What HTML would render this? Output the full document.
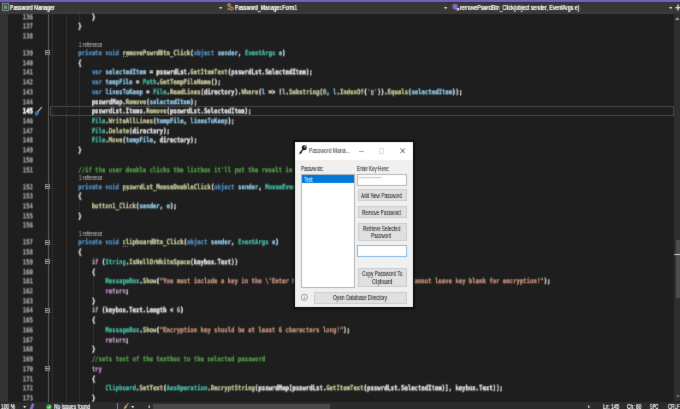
<!DOCTYPE html>
<html lang="en">
<head>
<meta charset="utf-8">
<title>Password Manager</title>
<style>
*{box-sizing:border-box;margin:0;padding:0}
html,body{width:680px;height:409px;overflow:hidden;background:#1e1e1e}
body{position:relative;font-family:"Liberation Sans",sans-serif;color:#dcdcdc}
#root{position:absolute;left:0;top:0;width:680px;height:409px;overflow:hidden;background:#1e1e1e;filter:url(#soft)}
#root div,#root .a,#root svg{position:absolute}
.ln{white-space:pre;font-family:"DejaVu Sans Mono","Liberation Mono",monospace;font-size:6.6px;line-height:10px;height:10px;color:#9a9a9a;text-align:right;width:30px;left:3px;transform-origin:100% 50%;transform:scale(0.8557,1.1);font-weight:bold}
.ln.cur{color:#ffffff}
.code{white-space:pre;font-family:"DejaVu Sans Mono","Liberation Mono",monospace;font-size:6.6px;line-height:10px;height:10px;left:50.8px;color:#dcdcdc;transform-origin:0 50%;transform:scale(0.8557,1.1);font-weight:bold}
.k{color:#4e8abc}.r{color:#be8ec4}.t{color:#47b19c}.m{color:#c1c196}.v{color:#8ac1df}.s{color:#bc8b77}.c{color:#4f9344}.n{color:#a0b595}.p{color:#dcdcdc}
.tx,.code,.ln{will-change:transform}
.code,.ln{text-shadow:0 0 0.7px currentColor;-webkit-text-stroke:0.25px currentColor;opacity:1}
.code span{-webkit-text-stroke-width:0.1px}
.ln{-webkit-text-stroke-width:0}
.ln.cur{-webkit-text-stroke-width:0.3px}
.tx{text-shadow:0 0 0.6px currentColor}
.tx{white-space:pre;transform-origin:0 50%;line-height:12px;height:12px}
.guide{width:1px;background:repeating-linear-gradient(to bottom,#404040 0,#404040 1px,transparent 1px,transparent 2px)}
.btn{background:#e0e0e0;border:1px solid #cbcbcb}
</style>
</head>
<body>
<svg width="0" height="0" style="position:absolute" aria-hidden="true"><filter id="soft" x="0" y="0" width="100%" height="100%" color-interpolation-filters="sRGB"><feConvolveMatrix order="3" kernelMatrix="0.015 0.06 0.015 0.06 0.70 0.06 0.015 0.06 0.015" divisor="1" edgeMode="duplicate" preserveAlpha="true"/></filter></svg>
<div id="root">
<!-- window chrome -->
<div style="left:0px;top:0px;width:680px;height:2px;background:#7361c6;"></div>
<div style="left:0px;top:2px;width:680px;height:12px;background:#373737;"></div>
<div style="left:0px;top:2px;width:680px;height:1px;background:#302f2c;"></div>
<div style="left:0px;top:12px;width:680px;height:2px;background:#3b3b3b;"></div>
<div style="left:0px;top:14px;width:8px;height:388px;background:#333333;"></div>
<!-- outlining margin and structure guides -->
<div style="left:48px;top:14px;width:1px;height:388px;background:#5e5e5e;"></div>
<div class="guide" style="left:52.1px;top:14px;height:388px"></div>
<div class="guide" style="left:65.7px;top:14px;height:388px"></div>
<div class="guide" style="left:79.3px;top:14px;height:6.9px"></div>
<div class="guide" style="left:79.3px;top:67.0px;height:77.8px"></div>
<div class="guide" style="left:79.3px;top:200.6px;height:9.7px"></div>
<div class="guide" style="left:79.3px;top:256.5px;height:145.9px"></div>
<div class="guide" style="left:92.9px;top:275.9px;height:19.5px"></div>
<div class="guide" style="left:92.9px;top:324.6px;height:19.5px"></div>
<div class="guide" style="left:92.9px;top:382.9px;height:9.7px"></div>
<div style="left:45px;top:50px;width:5px;height:5px;background:#2c2c2c;border:1px solid #848484"></div><div style="left:46px;top:52px;width:3px;height:1px;background:#b4b4b4"></div>
<div style="left:45px;top:184px;width:5px;height:5px;background:#2c2c2c;border:1px solid #848484"></div><div style="left:46px;top:186px;width:3px;height:1px;background:#b4b4b4"></div>
<div style="left:45px;top:240px;width:5px;height:5px;background:#2c2c2c;border:1px solid #848484"></div><div style="left:46px;top:242px;width:3px;height:1px;background:#b4b4b4"></div>
<div style="left:45px;top:259px;width:5px;height:5px;background:#2c2c2c;border:1px solid #848484"></div><div style="left:46px;top:261px;width:3px;height:1px;background:#b4b4b4"></div>
<div style="left:45px;top:308px;width:5px;height:5px;background:#2c2c2c;border:1px solid #848484"></div><div style="left:46px;top:310px;width:3px;height:1px;background:#b4b4b4"></div>
<div style="left:45px;top:366px;width:5px;height:5px;background:#2c2c2c;border:1px solid #848484"></div><div style="left:46px;top:368px;width:3px;height:1px;background:#b4b4b4"></div>
<!-- current line -->
<div style="left:50px;top:105.7px;width:624px;height:9.9px;border:1px solid #484848"></div>
<!-- code -->
<div class="ln" style="top:12px">136</div>
<div class="code" style="top:12px">            }</div>
<div class="ln" style="top:21px">137</div>
<div class="code" style="top:21px">        }</div>
<div class="ln" style="top:31px">138</div>
<span class="a tx" style="left:78.60px;top:39px;font-size:6.4px;color:#9a9a9a;transform:scaleX(0.7258);">1 reference</span>
<div class="ln" style="top:48px">139</div>
<div class="code" style="top:48px">        <span class="k">private</span> <span class="k">void</span> <span class="m">removePswrdBtn_Click</span>(<span class="k">object</span> <span class="v">sender</span>, <span class="t">EventArgs</span> <span class="v">e</span>)</div>
<div class="ln" style="top:58px">140</div>
<div class="code" style="top:58px">        {</div>
<div class="ln" style="top:67px">141</div>
<div class="code" style="top:67px">            <span class="k">var</span> <span class="v">selectedItem</span> = psswrdLst.<span class="m">GetItemText</span>(psswrdLst.SelectedItem);</div>
<div class="ln" style="top:77px">142</div>
<div class="code" style="top:77px">            <span class="k">var</span> <span class="v">tempFile</span> = <span class="t">Path</span>.<span class="m">GetTempFileName</span>();</div>
<div class="ln" style="top:87px">143</div>
<div class="code" style="top:87px">            <span class="k">var</span> <span class="v">linesToKeep</span> = <span class="t">File</span>.<span class="m">ReadLines</span>(directory).<span class="m">Where</span>(<span class="v">l</span> =&gt; !<span class="v">l</span>.<span class="m">Substring</span>(<span class="n">0</span>, <span class="v">l</span>.<span class="m">IndexOf</span>(<span class="s">&#x27;</span>▯<span class="s">&#x27;</span>)).<span class="m">Equals</span>(<span class="v">selectedItem</span>));</div>
<div class="ln" style="top:97px">144</div>
<div class="code" style="top:97px">            psswrdMap.<span class="m">Remove</span>(<span class="v">selectedItem</span>);</div>
<div class="ln cur" style="top:106px">145</div>
<div class="code" style="top:106px">            psswrdLst.Items.<span class="m">Remove</span>(psswrdLst.SelectedItem);</div>
<div class="ln" style="top:116px">146</div>
<div class="code" style="top:116px">            <span class="t">File</span>.<span class="m">WriteAllLines</span>(<span class="v">tempFile</span>, <span class="v">linesToKeep</span>);</div>
<div class="ln" style="top:126px">147</div>
<div class="code" style="top:126px">            <span class="t">File</span>.<span class="m">Delete</span>(directory);</div>
<div class="ln" style="top:135px">148</div>
<div class="code" style="top:135px">            <span class="t">File</span>.<span class="m">Move</span>(<span class="v">tempFile</span>, directory);</div>
<div class="ln" style="top:145px">149</div>
<div class="code" style="top:145px">        }</div>
<div class="ln" style="top:155px">150</div>
<div class="ln" style="top:165px">151</div>
<div class="code" style="top:165px">        <span class="c">//if the user double clicks the listbox it&#x27;ll put the result in the textbox</span></div>
<span class="a tx" style="left:78.60px;top:172px;font-size:6.4px;color:#9a9a9a;transform:scaleX(0.7258);">1 reference</span>
<div class="ln" style="top:182px">152</div>
<div class="code" style="top:182px">        <span class="k">private</span> <span class="k">void</span> <span class="m">psswrdLst_MouseDoubleClick</span>(<span class="k">object</span> <span class="v">sender</span>, <span class="t">MouseEventArgs</span> <span class="v">e</span>)</div>
<div class="ln" style="top:191px">153</div>
<div class="code" style="top:191px">        {</div>
<div class="ln" style="top:201px">154</div>
<div class="code" style="top:201px">            <span class="m">button1_Click</span>(<span class="v">sender</span>, <span class="v">e</span>);</div>
<div class="ln" style="top:211px">155</div>
<div class="code" style="top:211px">        }</div>
<div class="ln" style="top:220px">156</div>
<span class="a tx" style="left:78.60px;top:228px;font-size:6.4px;color:#9a9a9a;transform:scaleX(0.7258);">1 reference</span>
<div class="ln" style="top:237px">157</div>
<div class="code" style="top:237px">        <span class="k">private</span> <span class="k">void</span> <span class="m">clipboardBtn_Click</span>(<span class="k">object</span> <span class="v">sender</span>, <span class="t">EventArgs</span> <span class="v">e</span>)</div>
<div class="ln" style="top:247px">158</div>
<div class="code" style="top:247px">        {</div>
<div class="ln" style="top:257px">159</div>
<div class="code" style="top:257px">            <span class="r">if</span> (<span class="t">String</span>.<span class="m">IsNullOrWhiteSpace</span>(keybox.Text))</div>
<div class="ln" style="top:267px">160</div>
<div class="code" style="top:267px">            {</div>
<div class="ln" style="top:276px">161</div>
<div class="code" style="top:276px">                <span class="t">MessageBox</span>.<span class="m">Show</span>(<span class="s">&quot;You must include a key in the \&#x27;Enter Key Here\&#x27; box.                    Cannot leave key blank for encryption!&quot;</span>);</div>
<div class="ln" style="top:286px">162</div>
<div class="code" style="top:286px">                <span class="r">return</span>;</div>
<div class="ln" style="top:296px">163</div>
<div class="code" style="top:296px">            }</div>
<div class="ln" style="top:305px">164</div>
<div class="code" style="top:305px">            <span class="r">if</span> (keybox.Text.Length &lt; <span class="n">6</span>)</div>
<div class="ln" style="top:315px">165</div>
<div class="code" style="top:315px">            {</div>
<div class="ln" style="top:325px">166</div>
<div class="code" style="top:325px">                <span class="t">MessageBox</span>.<span class="m">Show</span>(<span class="s">&quot;Encryption key should be at least 6 characters long!&quot;</span>);</div>
<div class="ln" style="top:335px">167</div>
<div class="code" style="top:335px">                <span class="r">return</span>;</div>
<div class="ln" style="top:344px">168</div>
<div class="code" style="top:344px">            }</div>
<div class="ln" style="top:354px">169</div>
<div class="code" style="top:354px">            <span class="c">//sets text of the textbox to the selected password</span></div>
<div class="ln" style="top:364px">170</div>
<div class="code" style="top:364px">            <span class="r">try</span></div>
<div class="ln" style="top:374px">171</div>
<div class="code" style="top:374px">            {</div>
<div class="ln" style="top:383px">172</div>
<div class="code" style="top:383px">                <span class="t">Clipboard</span>.<span class="m">SetText</span>(<span class="t">AesOperation</span>.<span class="m">DecryptString</span>(psswrdMap[psswrdLst.<span class="m">GetItemText</span>(psswrdLst.SelectedItem)], keybox.Text));</div>
<div class="ln" style="top:393px">173</div>
<div class="code" style="top:393px">            }</div>
<div style="left:122.5px;top:56px;width:5px;height:1px;background:repeating-linear-gradient(to right,#8a8a8a 0,#8a8a8a 1px,transparent 1px,transparent 2px)"></div>
<div style="left:122.5px;top:190px;width:5px;height:1px;background:repeating-linear-gradient(to right,#8a8a8a 0,#8a8a8a 1px,transparent 1px,transparent 2px)"></div>
<div style="left:122.5px;top:246px;width:5px;height:1px;background:repeating-linear-gradient(to right,#8a8a8a 0,#8a8a8a 1px,transparent 1px,transparent 2px)"></div>
<svg style="left:33.5px;top:106px" width="9" height="12" viewBox="0 0 9 12"><path d="M1 8.2 Q0.4 6.4 2 5.2 L3.6 4.4 L5.2 6 L4.4 8.6 Q3 10.6 1.6 9.8 Z" fill="#3d70ac"/><path d="M4.4 5.2 L7.6 1.4" stroke="#c4c4c4" stroke-width="1.1" fill="none" stroke-linecap="round"/></svg>
<!-- navigation bar -->
<svg style="left:2px;top:3px" width="7" height="8" viewBox="0 0 7 8"><rect x="0.5" y="0.5" width="6" height="7" fill="#3b4a3c" stroke="#9aa59a" stroke-width="0.8"/><rect x="2" y="2.4" width="3" height="3.6" fill="#6f9a70"/></svg>
<span class="a tx" style="left:10.00px;top:2px;font-size:6.6px;color:#f4f4f4;transform:scaleX(0.7826);-webkit-text-stroke:0.2px currentColor;">Password Manager</span>
<svg style="left:219.30px;top:6.50px" width="3.4" height="2.2" viewBox="0 0 3.4 2.2"><polygon points="0,0 3.4,0 1.7,2.2" fill="#e0e0e0"/></svg>
<svg style="left:227px;top:3px" width="7" height="8" viewBox="0 0 7 8"><circle cx="2" cy="2" r="1.4" fill="none" stroke="#e0b469" stroke-width="0.9"/><circle cx="4.8" cy="5.6" r="1.4" fill="none" stroke="#e0b469" stroke-width="0.9"/><path d="M2.4 3.2 L3.6 4.6" stroke="#e0b469" stroke-width="0.9"/><circle cx="1.6" cy="6" r="1" fill="#c9a25a"/></svg>
<span class="a tx" style="left:235.00px;top:2px;font-size:6.6px;color:#f4f4f4;transform:scaleX(0.7862);-webkit-text-stroke:0.2px currentColor;">Password_Manager.Form1</span>
<svg style="left:444.30px;top:6.50px" width="3.4" height="2.2" viewBox="0 0 3.4 2.2"><polygon points="0,0 3.4,0 1.7,2.2" fill="#e0e0e0"/></svg>
<svg style="left:452px;top:3px" width="8" height="8" viewBox="0 0 8 8"><path d="M3 0.6 L5.8 2 L5.8 5.2 L3 6.8 L0.4 5.2 L0.4 2 Z" fill="#7d5fb8"/><path d="M0.6 2.1 L3 3.4 L5.6 2.1 M3 3.4 V6.6" stroke="#a88fd8" stroke-width="0.5" fill="none"/><rect x="4.6" y="5" width="2.8" height="2.4" fill="#cfcfcf"/></svg>
<span class="a tx" style="left:460.00px;top:2px;font-size:6.6px;color:#f4f4f4;transform:scaleX(0.7888);-webkit-text-stroke:0.2px currentColor;">removePswrdBtn_Click(object sender, EventArgs e)</span>
<svg style="left:669.10px;top:6.50px" width="3.4" height="2.2" viewBox="0 0 3.4 2.2"><polygon points="0,0 3.4,0 1.7,2.2" fill="#e0e0e0"/></svg>
<svg style="left:675px;top:4px" width="5" height="7" viewBox="0 0 5 7"><path d="M0.4 3.6 H5 M3 0.6 V6.6" stroke="#e4e4e4" stroke-width="1.3" fill="none"/></svg>
<!-- vertical scrollbar -->
<div style="left:674px;top:13px;width:6px;height:388px;background:#2e2e2e;"></div>
<div style="left:676px;top:240px;width:4px;height:58px;background:#4d4d4d;"></div>
<div style="left:674px;top:253.5px;width:6px;height:1px;background:#d0d0d0;"></div>
<svg style="left:675.4px;top:17px" width="4.6" height="3" viewBox="0 0 4.6 3"><path d="M0.2 2.9 L2.3 0.3 L4.4 2.9 Z" fill="#a8a8a8"/></svg>
<svg style="left:675.8px;top:395.2px" width="4" height="3" viewBox="0 0 4 3"><path d="M0.2 0.2 L2 2.6 L3.8 0.2 Z" fill="#8a8a8a"/></svg>
<!-- status bar -->
<div style="left:0px;top:401.5px;width:680px;height:8px;background:#2b2b2b;"></div>
<div style="left:152.5px;top:403.5px;width:177.5px;height:6px;background:#4a4a4a;"></div>
<span class="a tx" style="left:0.80px;top:401px;font-size:6.6px;color:#e6e6e6;transform:scaleX(0.7481);-webkit-text-stroke:0.2px currentColor;">100 %</span>
<svg style="left:22.60px;top:405.90px" width="3.4" height="2.2" viewBox="0 0 3.4 2.2"><polygon points="0,0 3.4,0 1.7,2.2" fill="#e0e0e0"/></svg>
<svg style="left:29px;top:403px" width="6" height="6" viewBox="0 0 6 6"><path d="M3.2 0.2 L5.4 1.2 L3.6 6 L0.6 6 Z" fill="#8f6fd0"/></svg>
<svg style="left:45.8px;top:403.7px" width="6" height="6" viewBox="0 0 6 6"><circle cx="3" cy="3" r="2.7" fill="#3fae4a"/><path d="M1.6 3.1 L2.7 4.2 L4.5 1.9" stroke="#fff" stroke-width="0.9" fill="none"/></svg>
<span class="a tx" style="left:53.70px;top:401px;font-size:6.6px;color:#e6e6e6;transform:scaleX(0.7670);-webkit-text-stroke:0.2px currentColor;">No issues found</span>
<div style="left:116.5px;top:403px;width:1px;height:6px;background:#8a8a8a;"></div>
<svg style="left:123px;top:403px" width="6" height="6" viewBox="0 0 6 6"><path d="M0.6 5.6 L2.6 2.6 L4 3.8 L2.2 5.8 Z" fill="#e2c46a"/><path d="M3.2 3 L5.4 0.4" stroke="#d8d8d8" stroke-width="0.9"/></svg>
<svg style="left:131.00px;top:405.90px" width="3.4" height="2.2" viewBox="0 0 3.4 2.2"><polygon points="0,0 3.4,0 1.7,2.2" fill="#e0e0e0"/></svg>
<svg style="left:147.50px;top:404.90px" width="2.2" height="3.6" viewBox="0 0 2.2 3.6"><polygon points="2.2,0 2.2,3.6 0,1.8" fill="#d0d0d0"/></svg>
<svg style="left:588.10px;top:404.90px" width="2.2" height="3.6" viewBox="0 0 2.2 3.6"><polygon points="0,0 0,3.6 2.2,1.8" fill="#d0d0d0"/></svg>
<span class="a tx" style="left:603.00px;top:401px;font-size:6.6px;color:#e6e6e6;transform:scaleX(0.7357);-webkit-text-stroke:0.2px currentColor;">Ln: 145</span>
<span class="a tx" style="left:627.00px;top:401px;font-size:6.6px;color:#e6e6e6;transform:scaleX(0.7457);-webkit-text-stroke:0.2px currentColor;">Ch: 60</span>
<span class="a tx" style="left:650.00px;top:401px;font-size:6.6px;color:#e6e6e6;transform:scaleX(0.6042);-webkit-text-stroke:0.2px currentColor;">SPC</span>
<span class="a tx" style="left:667.60px;top:401px;font-size:6.6px;color:#e6e6e6;transform:scaleX(0.6730);-webkit-text-stroke:0.2px currentColor;">CRLF</span>
<!-- Password Manager dialog -->
<div style="left:295px;top:142px;width:118px;height:165px;background:#f0f0f0;box-shadow:0 0 0 1px #060606,0 0 0 2px rgba(0,0,0,0.35),0 1px 4px 2px rgba(0,0,0,0.22)"></div>
<div style="left:295px;top:142px;width:118px;height:18px;background:#ffffff;"></div>
<svg style="left:298.8px;top:145.4px" width="8" height="9.4" viewBox="0 0 8 9.4"><circle cx="5.3" cy="2.7" r="2.5" fill="#111"/><circle cx="5.9" cy="2.1" r="0.75" fill="#fff"/><path d="M4.1 4.1 L0.9 8.4" stroke="#111" stroke-width="1.4" fill="none" stroke-linecap="round"/><path d="M2 7.2 L3 8" stroke="#111" stroke-width="0.9"/></svg>
<span class="a tx" style="left:308.80px;top:145px;font-size:6.4px;color:#2c2c2c;transform:scaleX(0.7985);text-shadow:none;">Password Mana...</span>
<div style="left:359px;top:150.5px;width:5px;height:1px;background:#a2a2a2;"></div>
<div style="left:379px;top:148px;width:5px;height:6px;border:1px solid #dcdcdc"></div>
<svg style="left:399.6px;top:148px" width="5.2" height="5.6" viewBox="0 0 5.2 5.6"><path d="M0.4 0.4 L4.8 5.2 M4.8 0.4 L0.4 5.2" stroke="#2a2a2a" stroke-width="0.8"/></svg>
<span class="a tx" style="left:301.30px;top:163px;font-size:6.4px;color:#0a0a0a;transform:scaleX(0.6862);text-shadow:none;">Passwords:</span>
<span class="a tx" style="left:357.40px;top:163px;font-size:6.4px;color:#0a0a0a;transform:scaleX(0.7072);text-shadow:none;">Enter Key Here:</span>
<div style="left:301px;top:174px;width:54px;height:114px;background:#fff;border:1px solid #b4b4b4"></div>
<div style="left:302px;top:175px;width:52px;height:8px;background:#0078d7;"></div>
<span class="a tx" style="left:303.60px;top:174px;font-size:6.4px;color:#ffffff;transform:scaleX(0.7327);text-shadow:none;">Test</span>
<div style="left:357px;top:174px;width:50px;height:12px;background:#fff;border:1px solid #b6b6b6"></div>
<span class="a tx" style="left:358.80px;top:173px;font-size:4.2px;color:#777;transform:scaleX(0.9382);text-shadow:none;">***************</span>
<div class="btn" style="left:358px;top:189px;width:49px;height:12px"></div><span class="a tx" style="left:361.30px;top:190px;font-size:6.4px;color:#0a0a0a;transform:scaleX(0.7341);text-shadow:none;">Add New Password</span>
<div class="btn" style="left:358px;top:206px;width:49px;height:12px"></div><span class="a tx" style="left:361.90px;top:207px;font-size:6.4px;color:#0a0a0a;transform:scaleX(0.7280);text-shadow:none;">Remove Password</span>
<div class="btn" style="left:358px;top:223px;width:49px;height:18px"></div><span class="a tx" style="left:363.00px;top:223px;font-size:6.4px;color:#0a0a0a;transform:scaleX(0.7423);text-shadow:none;">Retrieve Selected</span><span class="a tx" style="left:371.20px;top:230px;font-size:6.4px;color:#0a0a0a;transform:scaleX(0.7153);text-shadow:none;">Password</span>
<div style="left:357px;top:245px;width:50px;height:12px;background:#fff;border:1px solid #86b8e6"></div>
<div class="btn" style="left:358px;top:268px;width:49px;height:19px"></div><span class="a tx" style="left:361.60px;top:268px;font-size:6.4px;color:#0a0a0a;transform:scaleX(0.7588);text-shadow:none;">Copy Password To</span><span class="a tx" style="left:371.50px;top:276px;font-size:6.4px;color:#0a0a0a;transform:scaleX(0.7374);text-shadow:none;">Clipboard</span>
<div class="btn" style="left:314px;top:292px;width:93px;height:12px"></div><span class="a tx" style="left:332.80px;top:292px;font-size:6.4px;color:#0a0a0a;transform:scaleX(0.7492);text-shadow:none;">Open Database Directory</span>
<svg style="left:301.3px;top:294.3px" width="6.6" height="6.6" viewBox="0 0 6.6 6.6"><circle cx="3.3" cy="3.3" r="3" fill="#fff" stroke="#4a4a4a" stroke-width="0.6"/><path d="M3.3 2.9 L3.3 4.8" stroke="#444" stroke-width="0.7"/><circle cx="3.3" cy="1.9" r="0.4" fill="#444"/></svg>
</div>
</body>
</html>
